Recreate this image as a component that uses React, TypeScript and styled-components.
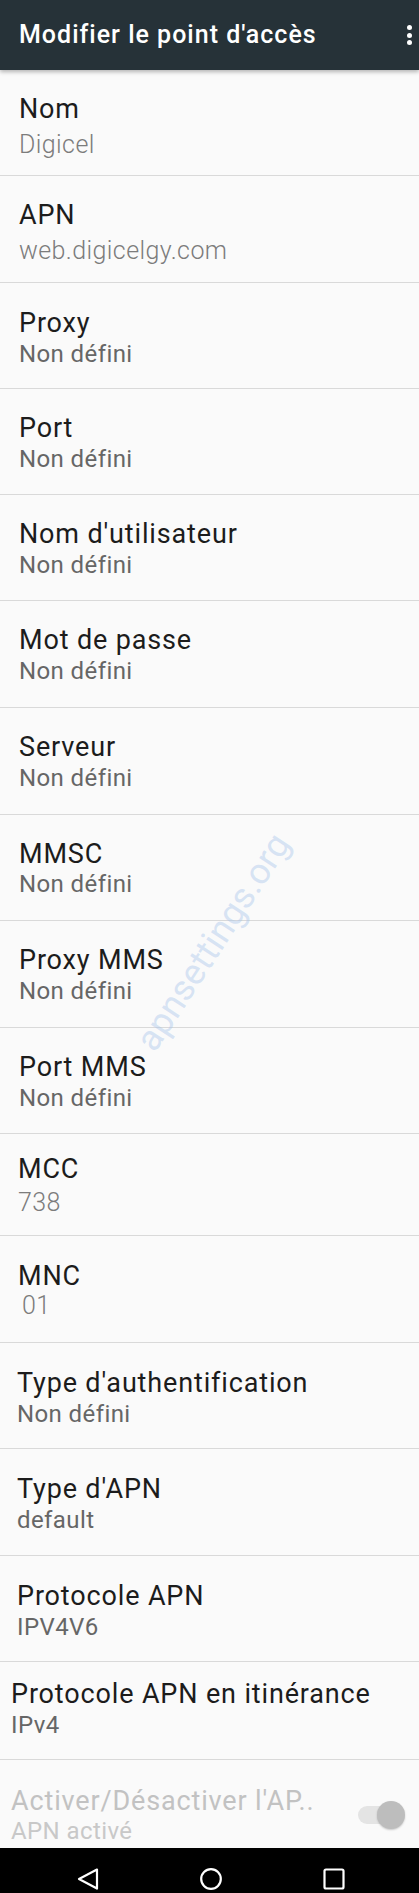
import React from 'react'
import styled, { createGlobalStyle } from 'styled-components'

const Global = createGlobalStyle`
  html, body {
    margin: 0;
    padding: 0;
    background: #fafafa;
    overflow: hidden;
  }
  body {
    font-family: Roboto, "Noto Sans", "Liberation Sans", sans-serif;
    -webkit-font-smoothing: antialiased;
  }
`

const Screen = styled.div`
  width: 419px;
  height: 1893px;
  display: flex;
  flex-direction: column;
  background: #fafafa;
  overflow: hidden;
`

const Toolbar = styled.header`
  height: 70px;
  flex: none;
  background: #263238;
  box-shadow: 0 2px 4px rgba(0, 0, 0, 0.28);
  display: flex;
  align-items: flex-start;
  justify-content: space-between;
  padding: 0 0 0 19px;
  box-sizing: border-box;
  position: relative;
  z-index: 2;
`

const ToolbarTitle = styled.h1`
  margin: 20px 0 0;
  font-size: 25px;
  line-height: 30px;
  font-weight: 500;
  color: #ffffff;
  letter-spacing: 1px;
`

const MoreButton = styled.div`
  width: 20px;
  margin: 25px 0 0;
  display: flex;
  flex-direction: column;
  align-items: center;
  gap: 2.5px;

  span {
    width: 5px;
    height: 5px;
    border-radius: 50%;
    background: #ffffff;
  }
`

const List = styled.main`
  flex: 1;
  position: relative;
  display: flex;
  flex-direction: column;
`

const Row = styled.div<{ $h: number; $top: number; $inset: number; $last?: boolean }>`
  height: ${p => p.$h}px;
  flex: none;
  box-sizing: border-box;
  padding: ${p => p.$top - 25}px 14px 0 ${p => p.$inset}px;
  border-bottom: ${p => (p.$last ? 'none' : '1px solid #d9d9d9')};
  display: flex;
  justify-content: space-between;
  align-items: flex-start;
`

const Texts = styled.div`
  display: flex;
  flex-direction: column;
`

const Title = styled.div<{ $disabled?: boolean }>`
  font-size: 27px;
  line-height: 32px;
  letter-spacing: 0.85px;
  color: ${p => (p.$disabled ? '#c2c2c2' : '#1c1c1c')};
  white-space: nowrap;
`

const Value = styled.div<{ $gap: number; $light?: boolean; $disabled?: boolean; $shift?: number }>`
  margin-top: ${p => p.$gap}px;
  margin-left: ${p => p.$shift ?? 0}px;
  font-size: ${p => (p.$light ? 25 : 24)}px;
  line-height: 28px;
  letter-spacing: 0.4px;
  font-weight: ${p => (p.$light ? 300 : 400)};
  color: ${p => (p.$disabled ? '#c8c8c8' : p.$light ? '#7c7c7c' : '#666666')};
  white-space: nowrap;
`

const Switch = styled.div`
  margin-top: 16px;
  width: 47px;
  height: 28px;
  position: relative;
  flex: none;

  &::before {
    content: '';
    position: absolute;
    left: 0;
    top: 5px;
    width: 36px;
    height: 18px;
    border-radius: 9px;
    background: #e4e4e4;
  }

  &::after {
    content: '';
    position: absolute;
    right: 0;
    top: 0;
    width: 28px;
    height: 28px;
    border-radius: 50%;
    background: #bdbdbd;
    box-shadow: 0 1px 2px rgba(0, 0, 0, 0.2);
  }
`

const Watermark = styled.div`
  position: absolute;
  left: 213px;
  top: 872px;
  transform: translate(-50%, -50%) rotate(-57deg);
  font-size: 36px;
  font-weight: 400;
  color: rgba(165, 195, 235, 0.42);
  white-space: nowrap;
  pointer-events: none;
`

const NavBar = styled.nav`
  height: 45px;
  flex: none;
  background: #000000;
  display: flex;
  align-items: flex-start;
  padding: 20px 0 0 77px;
  box-sizing: border-box;
  gap: 101px;

  svg {
    width: 22px;
    height: 22px;
    flex: none;
  }
`

type Item = {
  title: string
  value: string
  h: number
  top: number
  gap: number
  inset: number
  light?: boolean
  shift?: number
}

const items: Item[] = [
  { title: 'Nom', value: 'Digicel', h: 106, top: 48, gap: 6, inset: 19, light: true },
  { title: 'APN', value: 'web.digicelgy.com', h: 107, top: 48, gap: 6, inset: 19, light: true },
  { title: 'Proxy', value: 'Non défini', h: 106, top: 49, gap: 1, inset: 19 },
  { title: 'Port', value: 'Non défini', h: 106, top: 48, gap: 1, inset: 19 },
  { title: "Nom d'utilisateur", value: 'Non défini', h: 106, top: 48, gap: 1, inset: 19 },
  { title: 'Mot de passe', value: 'Non défini', h: 107, top: 48, gap: 1, inset: 19 },
  { title: 'Serveur', value: 'Non défini', h: 107, top: 48, gap: 1, inset: 19 },
  { title: 'MMSC', value: 'Non défini', h: 106, top: 48, gap: 0, inset: 19 },
  { title: 'Proxy MMS', value: 'Non défini', h: 107, top: 48, gap: 1, inset: 19 },
  { title: 'Port MMS', value: 'Non défini', h: 106, top: 48, gap: 1, inset: 19 },
  { title: 'MCC', value: '738', h: 102, top: 44, gap: 4, inset: 18, light: true },
  { title: 'MNC', value: '01', h: 107, top: 49, gap: 0, inset: 18, light: true, shift: 4 },
  { title: "Type d'authentification", value: 'Non défini', h: 106, top: 49, gap: 1, inset: 17 },
  { title: "Type d'APN", value: 'default', h: 107, top: 49, gap: 1, inset: 17 },
  { title: 'Protocole APN', value: 'IPV4V6', h: 106, top: 49, gap: 1, inset: 17 },
  { title: 'Protocole APN en itinérance', value: 'IPv4', h: 98, top: 41, gap: 1, inset: 11 },
]

function Back() {
  return (
    <svg viewBox="0 0 22 22" fill="none" stroke="#fff" strokeWidth="2.2" strokeLinejoin="round">
      <path d="M20 1.5 L2 11 L20 20.5 Z" />
    </svg>
  )
}

function Home() {
  return (
    <svg viewBox="0 0 22 22" fill="none" stroke="#fff" strokeWidth="2.2">
      <circle cx="11" cy="11" r="9.8" />
    </svg>
  )
}

function Recents() {
  return (
    <svg viewBox="0 0 22 22" fill="none" stroke="#fff" strokeWidth="2.2">
      <rect x="1.5" y="1.5" width="19" height="19" rx="1.5" />
    </svg>
  )
}

export default function App() {
  return (
    <Screen>
      <Global />
      <Toolbar>
        <ToolbarTitle>Modifier le point d'accès</ToolbarTitle>
        <MoreButton>
          <span />
          <span />
          <span />
        </MoreButton>
      </Toolbar>

      <List>
        {items.map(it => (
          <Row key={it.title} $h={it.h} $top={it.top} $inset={it.inset}>
            <Texts>
              <Title>{it.title}</Title>
              <Value $gap={it.gap} $light={it.light} $shift={it.shift}>
                {it.value}
              </Value>
            </Texts>
          </Row>
        ))}
        <Row $h={88} $top={50} $inset={11} $last>
          <Texts>
            <Title $disabled>Activer/Désactiver l'AP..</Title>
            <Value $gap={0} $disabled>
              APN activé
            </Value>
          </Texts>
          <Switch />
        </Row>
        <Watermark>apnsettings.org</Watermark>
      </List>

      <NavBar>
        <Back />
        <Home />
        <Recents />
      </NavBar>
    </Screen>
  )
}
